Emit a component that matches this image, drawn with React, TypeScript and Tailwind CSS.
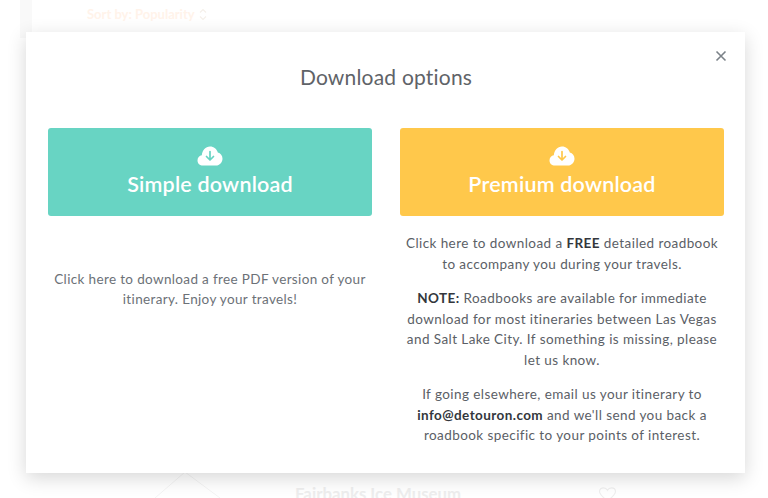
const font = { fontFamily: '"Lato", "Noto Sans", sans-serif' };

function CloudIcon({ arrow }: { arrow: string }) {
  return (
    <svg width="26" height="20" viewBox="0 0 26 20" className="block">
      <path
        fill="#fff"
        d="M6 19.500C2.800 19.500.5 17.300.5 14.400c0-2.600 1.800-4.700 4.300-5.100C5.300 4.200 8.600.5 13 .5c3.800 0 6.900 2.500 7.800 6.100 2.800.7 4.700 3.100 4.700 6.100 0 3.700-2.900 6.800-6.500 6.800H6z"
      />
      <path d="M13 5.500v8M9.500 10.500l3.500 3.500 3.500-3.500" fill="none" stroke={arrow} strokeWidth="1.700" strokeLinecap="round" strokeLinejoin="round" />
    </svg>
  );
}

function DownloadButton({ label, bg, arrow }: { label: string; bg: string; arrow: string }) {
  return (
    <button className={`flex h-[88px] w-full flex-col items-center rounded-[3px] pt-[18px] text-white ${bg}`}>
      <CloudIcon arrow={arrow} />
      <span className="mt-[3px] text-[21.500px] leading-[30px] font-semibold tracking-[0.2px]">{label}</span>
    </button>
  );
}

export default function App() {
  return (
    <div className="relative h-[498px] w-[768px] overflow-hidden bg-white" style={font}>
      <div className="absolute top-0 left-[20px] h-[38px] w-[12px] bg-[#f9f9f9]" />
      <div className="absolute top-[5px] left-[87px] flex items-center gap-[4px] text-[13px] leading-[18px] font-bold text-[#fff3ea]">
        <span>Sort by: Popularity</span>
        <svg width="8" height="13" viewBox="0 0 8 13" fill="none" stroke="#f5f0ea" strokeWidth="1.200">
          <path d="M1 4.500L4 1.500l3 3M1 8.500l3 3 3-3" />
        </svg>
      </div>
      <svg className="absolute top-[470px] left-[150px]" width="80" height="28" viewBox="0 0 80 28" fill="none" stroke="#f4f4f4">
        <path d="M5 28L35 2M35 2L70 28" />
      </svg>
      <div className="absolute top-[482px] left-[295px] text-[16.800px] leading-[24px] font-bold text-[#eeeeee]">Fairbanks Ice Museum</div>
      <svg className="absolute top-[487px] left-[598px]" width="19" height="14" viewBox="0 0 18 14" fill="none" stroke="#efefef" strokeWidth="1.200">
        <path d="M9 14C4 10 1 7 1 4.500 1 2 3 .8 5 .8c1.800 0 3.200 1 4 2.400C9.800 1.800 11.200.8 13 .8c2 0 4 1.200 4 3.700C17 7 14 10 9 14z" />
      </svg>

      <div className="absolute top-[32px] left-[26px] h-[441px] w-[719px] bg-white pr-[21px] pl-[22px] shadow-[0_5px_18px_rgba(0,0,0,0.16)]">
        <button className="absolute top-[18px] right-[18px] text-[#7b8288]">
          <svg width="12" height="12" viewBox="0 0 12 12" fill="none" stroke="currentColor" strokeWidth="1.600" className="block">
            <path d="M1.500 1.500l9 9M10.500 1.500l-9 9" />
          </svg>
        </button>
        <h2 className="pt-[29px] text-center text-[21px] leading-[32px] font-normal tracking-[0.2px] text-[#5f6368]">Download options</h2>
        <div className="mt-[35px] grid grid-cols-2 gap-[28px]">
          <div>
            <DownloadButton label="Simple download" bg="bg-[#68d4c3]" arrow="#68d4c3" />
            <p className="mt-[53px] px-[4px] text-center text-[13.500px] leading-[20px] tracking-[0.35px] text-[#6c7177]">
              Click here to download a free PDF version of your itinerary. Enjoy your travels!
            </p>
          </div>
          <div>
            <DownloadButton label="Premium download" bg="bg-[#ffc84b]" arrow="#ffc84b" />
            <div className="mt-[17px] flex flex-col gap-[14px] px-[4px] text-center text-[13.500px] leading-[20.500px] tracking-[0.42px] text-[#5b6066]">
              <p>
                Click here to download a <b className="font-bold text-[#33373c]">FREE</b> detailed roadbook to accompany you during your travels.
              </p>
              <p>
                <b className="font-bold text-[#33373c]">NOTE:</b> Roadbooks are available for immediate download for most itineraries between Las Vegas and Salt Lake City. If something is missing, please let us know.
              </p>
              <p>
                If going elsewhere, email us your itinerary to <b className="font-bold text-[#33373c]">info@detouron.com</b> and we'll send you back a roadbook specific to your points of interest.
              </p>
            </div>
          </div>
        </div>
      </div>
    </div>
  );
}
